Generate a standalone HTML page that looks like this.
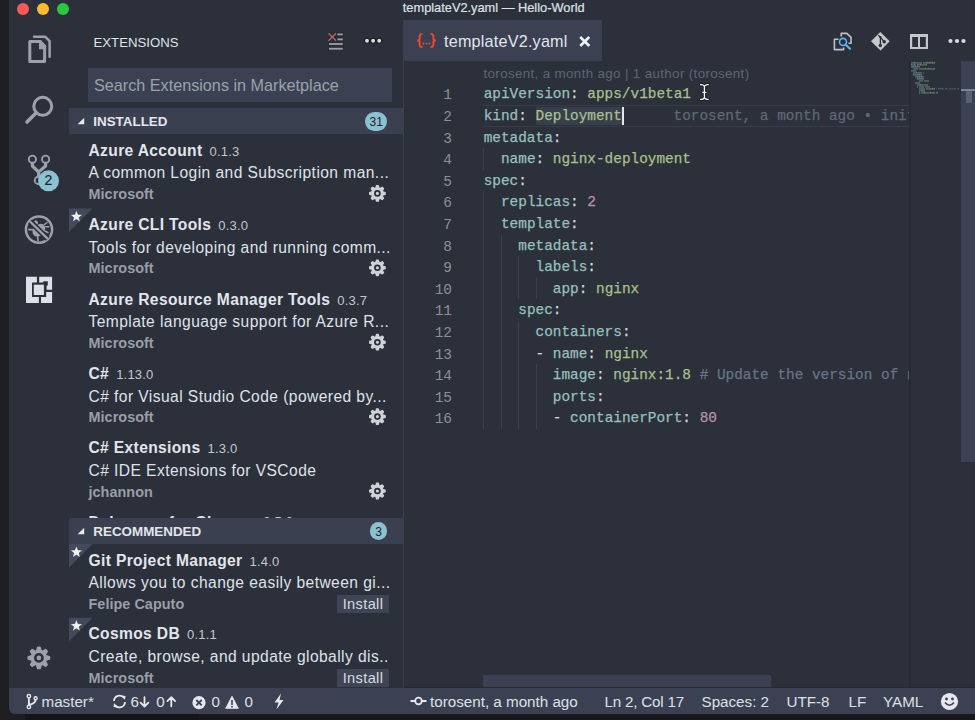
<!DOCTYPE html>
<html><head><meta charset="utf-8"><style>
*{margin:0;padding:0;box-sizing:border-box}
html,body{width:975px;height:720px;overflow:hidden;background:#1e1d21;font-family:"Liberation Sans",sans-serif}
.a{position:absolute;white-space:nowrap}
.t{font-weight:bold;font-size:15.6px;color:#e2e5ec;letter-spacing:0.35px}
.v{font-weight:normal;font-size:13px;color:#c3c7cf;letter-spacing:0.2px}
.d{font-size:15.6px;color:#dfe2e9;letter-spacing:0.43px}
.p{font-weight:bold;font-size:14.4px;color:#9a9ea8;letter-spacing:0.05px}
.hl{font-weight:bold;font-size:13.4px;color:#e2e5ec}
.badge{position:absolute;border-radius:10px;background:#8bc2d2;color:#2b303b;text-align:center}
.code{font-family:"Liberation Mono",monospace;font-size:14.4px;line-height:21.6px;-webkit-text-stroke:0.25px}
.ln{position:absolute;width:60px;text-align:right;color:#8a9099;font-family:"Liberation Mono",monospace;font-size:14.4px;line-height:21.6px}
.k{color:#96c0bf}.s{color:#a8c08b}.n{color:#b892b0}.w{color:#d5d8de}.c{color:#687585}
.sb{font-size:15.2px;color:#dde0e7}
.inst{width:52px;height:18px;background:#3f4555;color:#d8dbe2;font-size:14.6px;letter-spacing:0.35px;line-height:19px;text-align:center}
</style></head><body>
<div class="a" style="left:25px;top:714px;width:174px;height:6px;background:#151518;"></div>
<div class="a" style="left:199px;top:714px;width:776px;height:6px;background:#19191c;"></div>
<div class="a" style="left:9px;top:0px;width:966px;height:714px;background:#2b303b;border-bottom-left-radius:6px"></div>
<div class="a " style="left:402.8px;top:0.2px;font-size:12.8px;color:#dfe1e6;-webkit-text-stroke:0.2px">templateV2.yaml — Hello-World</div>
<div class="a " style="left:93.5px;top:35px;font-size:13.2px;color:#dfe2e9">EXTENSIONS</div>
<div class="a" style="left:88px;top:68px;width:304px;height:34px;background:#3b4152;"></div>
<div class="a " style="left:94px;top:76px;font-size:16.2px;color:#9ca1ab">Search Extensions in Marketplace</div>
<div class="a" style="left:69px;top:134px;width:334px;height:384px;overflow:hidden"><div style="position:absolute;left:-69px;top:-134px;width:975px;height:720px"><div class="a t" style="left:88.5px;top:141.7px">Azure Account<span class="v" style="margin-left:7px;">0.1.3</span></div><div class="a d" style="left:88.5px;top:164.4px">A common Login and Subscription man...</div><div class="a p" style="left:88.5px;top:185.9px">Microsoft</div><div class="a t" style="left:88.5px;top:216.1px">Azure CLI Tools<span class="v" style="margin-left:7px;">0.3.0</span></div><div class="a d" style="left:88.5px;top:238.8px">Tools for developing and running comm...</div><div class="a p" style="left:88.5px;top:260.3px">Microsoft</div><div class="a t" style="left:88.5px;top:290.5px">Azure Resource Manager Tools<span class="v" style="margin-left:7px;">0.3.7</span></div><div class="a d" style="left:88.5px;top:313.2px">Template language support for Azure R...</div><div class="a p" style="left:88.5px;top:334.7px">Microsoft</div><div class="a t" style="left:88.5px;top:364.90000000000003px">C#<span class="v" style="margin-left:7px;">1.13.0</span></div><div class="a d" style="left:88.5px;top:387.6px">C# for Visual Studio Code (powered by...</div><div class="a p" style="left:88.5px;top:409.1px">Microsoft</div><div class="a t" style="left:88.5px;top:439.3px">C# Extensions<span class="v" style="margin-left:7px;">1.3.0</span></div><div class="a d" style="left:88.5px;top:462.0px">C# IDE Extensions for VSCode</div><div class="a p" style="left:88.5px;top:483.5px">jchannon</div><div class="a t" style="left:88.5px;top:513.7px">Debugger for Chrome<span class="v" style="margin-left:7px;position:relative;top:-1.6px;">3.5.0</span></div><div class="a d" style="left:88.5px;top:536.4px">Debug your JavaScript code in the Chro...</div><div class="a p" style="left:88.5px;top:557.9px">Microsoft</div><svg class="a" style="left:0;top:0" width="975" height="720"><g transform="translate(377.4,193.4)" fill="#cfd2d7"><circle r="6.0"/><path d="M-1.65 -5.0 L-0.858 -7.7 L0.858 -7.7 L1.65 -5.0 Z" stroke="#cfd2d7" stroke-width="1.39" stroke-linejoin="round" transform="rotate(0.0)"/><path d="M-1.65 -5.0 L-0.858 -7.7 L0.858 -7.7 L1.65 -5.0 Z" stroke="#cfd2d7" stroke-width="1.39" stroke-linejoin="round" transform="rotate(45.0)"/><path d="M-1.65 -5.0 L-0.858 -7.7 L0.858 -7.7 L1.65 -5.0 Z" stroke="#cfd2d7" stroke-width="1.39" stroke-linejoin="round" transform="rotate(90.0)"/><path d="M-1.65 -5.0 L-0.858 -7.7 L0.858 -7.7 L1.65 -5.0 Z" stroke="#cfd2d7" stroke-width="1.39" stroke-linejoin="round" transform="rotate(135.0)"/><path d="M-1.65 -5.0 L-0.858 -7.7 L0.858 -7.7 L1.65 -5.0 Z" stroke="#cfd2d7" stroke-width="1.39" stroke-linejoin="round" transform="rotate(180.0)"/><path d="M-1.65 -5.0 L-0.858 -7.7 L0.858 -7.7 L1.65 -5.0 Z" stroke="#cfd2d7" stroke-width="1.39" stroke-linejoin="round" transform="rotate(225.0)"/><path d="M-1.65 -5.0 L-0.858 -7.7 L0.858 -7.7 L1.65 -5.0 Z" stroke="#cfd2d7" stroke-width="1.39" stroke-linejoin="round" transform="rotate(270.0)"/><path d="M-1.65 -5.0 L-0.858 -7.7 L0.858 -7.7 L1.65 -5.0 Z" stroke="#cfd2d7" stroke-width="1.39" stroke-linejoin="round" transform="rotate(315.0)"/><circle r="2.45" fill="none" stroke="#2b303b" stroke-width="1.75"/></g><path d="M69 208.4 H92.5 L69 231.9 Z" fill="#434a5c"/><polygon points="76.40,210.30 77.99,214.42 82.39,214.65 78.97,217.43 80.10,221.70 76.40,219.30 72.70,221.70 73.83,217.43 70.41,214.65 74.81,214.42" fill="#f2f3f5" stroke="#1d2027" stroke-width="0.6" stroke-opacity="0.5"/><g transform="translate(377.4,267.8)" fill="#cfd2d7"><circle r="6.0"/><path d="M-1.65 -5.0 L-0.858 -7.7 L0.858 -7.7 L1.65 -5.0 Z" stroke="#cfd2d7" stroke-width="1.39" stroke-linejoin="round" transform="rotate(0.0)"/><path d="M-1.65 -5.0 L-0.858 -7.7 L0.858 -7.7 L1.65 -5.0 Z" stroke="#cfd2d7" stroke-width="1.39" stroke-linejoin="round" transform="rotate(45.0)"/><path d="M-1.65 -5.0 L-0.858 -7.7 L0.858 -7.7 L1.65 -5.0 Z" stroke="#cfd2d7" stroke-width="1.39" stroke-linejoin="round" transform="rotate(90.0)"/><path d="M-1.65 -5.0 L-0.858 -7.7 L0.858 -7.7 L1.65 -5.0 Z" stroke="#cfd2d7" stroke-width="1.39" stroke-linejoin="round" transform="rotate(135.0)"/><path d="M-1.65 -5.0 L-0.858 -7.7 L0.858 -7.7 L1.65 -5.0 Z" stroke="#cfd2d7" stroke-width="1.39" stroke-linejoin="round" transform="rotate(180.0)"/><path d="M-1.65 -5.0 L-0.858 -7.7 L0.858 -7.7 L1.65 -5.0 Z" stroke="#cfd2d7" stroke-width="1.39" stroke-linejoin="round" transform="rotate(225.0)"/><path d="M-1.65 -5.0 L-0.858 -7.7 L0.858 -7.7 L1.65 -5.0 Z" stroke="#cfd2d7" stroke-width="1.39" stroke-linejoin="round" transform="rotate(270.0)"/><path d="M-1.65 -5.0 L-0.858 -7.7 L0.858 -7.7 L1.65 -5.0 Z" stroke="#cfd2d7" stroke-width="1.39" stroke-linejoin="round" transform="rotate(315.0)"/><circle r="2.45" fill="none" stroke="#2b303b" stroke-width="1.75"/></g><g transform="translate(377.4,342.2)" fill="#cfd2d7"><circle r="6.0"/><path d="M-1.65 -5.0 L-0.858 -7.7 L0.858 -7.7 L1.65 -5.0 Z" stroke="#cfd2d7" stroke-width="1.39" stroke-linejoin="round" transform="rotate(0.0)"/><path d="M-1.65 -5.0 L-0.858 -7.7 L0.858 -7.7 L1.65 -5.0 Z" stroke="#cfd2d7" stroke-width="1.39" stroke-linejoin="round" transform="rotate(45.0)"/><path d="M-1.65 -5.0 L-0.858 -7.7 L0.858 -7.7 L1.65 -5.0 Z" stroke="#cfd2d7" stroke-width="1.39" stroke-linejoin="round" transform="rotate(90.0)"/><path d="M-1.65 -5.0 L-0.858 -7.7 L0.858 -7.7 L1.65 -5.0 Z" stroke="#cfd2d7" stroke-width="1.39" stroke-linejoin="round" transform="rotate(135.0)"/><path d="M-1.65 -5.0 L-0.858 -7.7 L0.858 -7.7 L1.65 -5.0 Z" stroke="#cfd2d7" stroke-width="1.39" stroke-linejoin="round" transform="rotate(180.0)"/><path d="M-1.65 -5.0 L-0.858 -7.7 L0.858 -7.7 L1.65 -5.0 Z" stroke="#cfd2d7" stroke-width="1.39" stroke-linejoin="round" transform="rotate(225.0)"/><path d="M-1.65 -5.0 L-0.858 -7.7 L0.858 -7.7 L1.65 -5.0 Z" stroke="#cfd2d7" stroke-width="1.39" stroke-linejoin="round" transform="rotate(270.0)"/><path d="M-1.65 -5.0 L-0.858 -7.7 L0.858 -7.7 L1.65 -5.0 Z" stroke="#cfd2d7" stroke-width="1.39" stroke-linejoin="round" transform="rotate(315.0)"/><circle r="2.45" fill="none" stroke="#2b303b" stroke-width="1.75"/></g><g transform="translate(377.4,416.6)" fill="#cfd2d7"><circle r="6.0"/><path d="M-1.65 -5.0 L-0.858 -7.7 L0.858 -7.7 L1.65 -5.0 Z" stroke="#cfd2d7" stroke-width="1.39" stroke-linejoin="round" transform="rotate(0.0)"/><path d="M-1.65 -5.0 L-0.858 -7.7 L0.858 -7.7 L1.65 -5.0 Z" stroke="#cfd2d7" stroke-width="1.39" stroke-linejoin="round" transform="rotate(45.0)"/><path d="M-1.65 -5.0 L-0.858 -7.7 L0.858 -7.7 L1.65 -5.0 Z" stroke="#cfd2d7" stroke-width="1.39" stroke-linejoin="round" transform="rotate(90.0)"/><path d="M-1.65 -5.0 L-0.858 -7.7 L0.858 -7.7 L1.65 -5.0 Z" stroke="#cfd2d7" stroke-width="1.39" stroke-linejoin="round" transform="rotate(135.0)"/><path d="M-1.65 -5.0 L-0.858 -7.7 L0.858 -7.7 L1.65 -5.0 Z" stroke="#cfd2d7" stroke-width="1.39" stroke-linejoin="round" transform="rotate(180.0)"/><path d="M-1.65 -5.0 L-0.858 -7.7 L0.858 -7.7 L1.65 -5.0 Z" stroke="#cfd2d7" stroke-width="1.39" stroke-linejoin="round" transform="rotate(225.0)"/><path d="M-1.65 -5.0 L-0.858 -7.7 L0.858 -7.7 L1.65 -5.0 Z" stroke="#cfd2d7" stroke-width="1.39" stroke-linejoin="round" transform="rotate(270.0)"/><path d="M-1.65 -5.0 L-0.858 -7.7 L0.858 -7.7 L1.65 -5.0 Z" stroke="#cfd2d7" stroke-width="1.39" stroke-linejoin="round" transform="rotate(315.0)"/><circle r="2.45" fill="none" stroke="#2b303b" stroke-width="1.75"/></g><g transform="translate(377.4,491.0)" fill="#cfd2d7"><circle r="6.0"/><path d="M-1.65 -5.0 L-0.858 -7.7 L0.858 -7.7 L1.65 -5.0 Z" stroke="#cfd2d7" stroke-width="1.39" stroke-linejoin="round" transform="rotate(0.0)"/><path d="M-1.65 -5.0 L-0.858 -7.7 L0.858 -7.7 L1.65 -5.0 Z" stroke="#cfd2d7" stroke-width="1.39" stroke-linejoin="round" transform="rotate(45.0)"/><path d="M-1.65 -5.0 L-0.858 -7.7 L0.858 -7.7 L1.65 -5.0 Z" stroke="#cfd2d7" stroke-width="1.39" stroke-linejoin="round" transform="rotate(90.0)"/><path d="M-1.65 -5.0 L-0.858 -7.7 L0.858 -7.7 L1.65 -5.0 Z" stroke="#cfd2d7" stroke-width="1.39" stroke-linejoin="round" transform="rotate(135.0)"/><path d="M-1.65 -5.0 L-0.858 -7.7 L0.858 -7.7 L1.65 -5.0 Z" stroke="#cfd2d7" stroke-width="1.39" stroke-linejoin="round" transform="rotate(180.0)"/><path d="M-1.65 -5.0 L-0.858 -7.7 L0.858 -7.7 L1.65 -5.0 Z" stroke="#cfd2d7" stroke-width="1.39" stroke-linejoin="round" transform="rotate(225.0)"/><path d="M-1.65 -5.0 L-0.858 -7.7 L0.858 -7.7 L1.65 -5.0 Z" stroke="#cfd2d7" stroke-width="1.39" stroke-linejoin="round" transform="rotate(270.0)"/><path d="M-1.65 -5.0 L-0.858 -7.7 L0.858 -7.7 L1.65 -5.0 Z" stroke="#cfd2d7" stroke-width="1.39" stroke-linejoin="round" transform="rotate(315.0)"/><circle r="2.45" fill="none" stroke="#2b303b" stroke-width="1.75"/></g><g transform="translate(377.4,565.4)" fill="#cfd2d7"><circle r="6.0"/><path d="M-1.65 -5.0 L-0.858 -7.7 L0.858 -7.7 L1.65 -5.0 Z" stroke="#cfd2d7" stroke-width="1.39" stroke-linejoin="round" transform="rotate(0.0)"/><path d="M-1.65 -5.0 L-0.858 -7.7 L0.858 -7.7 L1.65 -5.0 Z" stroke="#cfd2d7" stroke-width="1.39" stroke-linejoin="round" transform="rotate(45.0)"/><path d="M-1.65 -5.0 L-0.858 -7.7 L0.858 -7.7 L1.65 -5.0 Z" stroke="#cfd2d7" stroke-width="1.39" stroke-linejoin="round" transform="rotate(90.0)"/><path d="M-1.65 -5.0 L-0.858 -7.7 L0.858 -7.7 L1.65 -5.0 Z" stroke="#cfd2d7" stroke-width="1.39" stroke-linejoin="round" transform="rotate(135.0)"/><path d="M-1.65 -5.0 L-0.858 -7.7 L0.858 -7.7 L1.65 -5.0 Z" stroke="#cfd2d7" stroke-width="1.39" stroke-linejoin="round" transform="rotate(180.0)"/><path d="M-1.65 -5.0 L-0.858 -7.7 L0.858 -7.7 L1.65 -5.0 Z" stroke="#cfd2d7" stroke-width="1.39" stroke-linejoin="round" transform="rotate(225.0)"/><path d="M-1.65 -5.0 L-0.858 -7.7 L0.858 -7.7 L1.65 -5.0 Z" stroke="#cfd2d7" stroke-width="1.39" stroke-linejoin="round" transform="rotate(270.0)"/><path d="M-1.65 -5.0 L-0.858 -7.7 L0.858 -7.7 L1.65 -5.0 Z" stroke="#cfd2d7" stroke-width="1.39" stroke-linejoin="round" transform="rotate(315.0)"/><circle r="2.45" fill="none" stroke="#2b303b" stroke-width="1.75"/></g></svg></div></div>
<div class="a" style="left:69px;top:108px;width:334px;height:26px;background:#3b4050;"></div>
<div class="a hl" style="left:93.3px;top:114px;">INSTALLED</div>
<div class="badge" style="left:365.2px;top:111.5px;width:22px;height:19px;line-height:21.5px;font-size:12px;color:#1f2229;border-radius:9.5px">31</div>
<div class="a" style="left:69px;top:518px;width:334px;height:26px;background:#3b4050;"></div>
<div class="a hl" style="left:93.3px;top:524px;">RECOMMENDED</div>
<div class="badge" style="left:370.0px;top:522.0px;width:17.2px;height:18px;line-height:20.5px;font-size:12px;color:#1f2229;border-radius:9.0px">3</div>
<div class="a" style="left:69px;top:544px;width:334px;height:144px;overflow:hidden"><div style="position:absolute;left:-69px;top:-544px;width:975px;height:720px"><div class="a t" style="left:88.5px;top:551.7px">Git Project Manager<span class="v" style="margin-left:7px;">1.4.0</span></div><div class="a d" style="left:88.5px;top:574.4px">Allows you to change easily between gi...</div><div class="a p" style="left:88.5px;top:595.9px">Felipe Caputo</div><div class="a inst" style="left:337px;top:595.0px">Install</div><div class="a t" style="left:88.5px;top:625.4000000000001px">Cosmos DB<span class="v" style="margin-left:7px;">0.1.1</span></div><div class="a d" style="left:88.5px;top:648.1px">Create, browse, and update globally dis..</div><div class="a p" style="left:88.5px;top:669.6px">Microsoft</div><div class="a inst" style="left:337px;top:668.7px">Install</div><svg class="a" style="left:0;top:0" width="975" height="720"><path d="M69 544.0 H92.5 L69 567.5 Z" fill="#434a5c"/><polygon points="76.40,545.90 77.99,550.02 82.39,550.25 78.97,553.03 80.10,557.30 76.40,554.90 72.70,557.30 73.83,553.03 70.41,550.25 74.81,550.02" fill="#f2f3f5" stroke="#1d2027" stroke-width="0.6" stroke-opacity="0.5"/><path d="M69 617.7 H92.5 L69 641.2 Z" fill="#434a5c"/><polygon points="76.40,619.60 77.99,623.72 82.39,623.95 78.97,626.73 80.10,631.00 76.40,628.60 72.70,631.00 73.83,626.73 70.41,623.95 74.81,623.72" fill="#f2f3f5" stroke="#1d2027" stroke-width="0.6" stroke-opacity="0.5"/></svg></div></div>
<div class="a" style="left:403px;top:20px;width:1px;height:668px;background:#3a404d;"></div>
<div class="a" style="left:403.3px;top:20px;width:198.4px;height:41px;background:#3b4152;"></div>
<div class="a " style="left:444px;top:32px;font-size:16.2px;color:#e2e5ec;letter-spacing:0.2px">templateV2.yaml</div>
<div class="a " style="left:483.5px;top:65.8px;font-size:13.4px;letter-spacing:0.34px;color:#5d6676">torosent, a month ago | 1 author (torosent)</div>
<div class="a" style="left:404px;top:61px;width:506px;height:627px;overflow:hidden"><div style="position:absolute;left:-404px;top:-61px;width:975px;height:720px"><div class="a" style="left:483px;top:105.0px;width:427px;height:21.6px;border-top:1.5px solid #363c49;border-bottom:1.5px solid #363c49"></div><div class="a" style="left:535.54px;top:106.5px;width:86.4px;height:18.6px;background:#383e4b"></div><div class="a" style="left:483.2px;top:148.20000000000002px;width:1px;height:21.6px;background:#3a404c"></div><div class="a" style="left:483.2px;top:191.4px;width:1px;height:237.60000000000002px;background:#3a404c"></div><div class="a" style="left:500.98px;top:234.60000000000002px;width:1px;height:194.4px;background:#3a404c"></div><div class="a" style="left:518.26px;top:256.20000000000005px;width:1px;height:43.2px;background:#3a404c"></div><div class="a" style="left:535.54px;top:277.8px;width:1px;height:21.6px;background:#3a404c"></div><div class="a" style="left:518.26px;top:321.0px;width:1px;height:108.0px;background:#3a404c"></div><div class="a" style="left:535.54px;top:364.20000000000005px;width:1px;height:64.80000000000001px;background:#3a404c"></div><div class="ln" style="left:392px;top:85.4px">1</div><div class="a code" style="left:483.7px;top:84.30000000000001px"><span class="k">apiVersion</span><span class="w">:</span> <span class="s">apps/v1beta1</span></div><div class="ln" style="left:392px;top:107.0px">2</div><div class="a code" style="left:483.7px;top:105.9px"><span class="k">kind</span><span class="w">:</span> <span class="s">Deployment</span></div><div class="ln" style="left:392px;top:128.60000000000002px">3</div><div class="a code" style="left:483.7px;top:127.50000000000001px"><span class="k">metadata</span><span class="w">:</span></div><div class="ln" style="left:392px;top:150.20000000000002px">4</div><div class="a code" style="left:500.98px;top:149.10000000000002px"><span class="k">name</span><span class="w">:</span> <span class="s">nginx-deployment</span></div><div class="ln" style="left:392px;top:171.8px">5</div><div class="a code" style="left:483.7px;top:170.70000000000002px"><span class="k">spec</span><span class="w">:</span></div><div class="ln" style="left:392px;top:193.4px">6</div><div class="a code" style="left:500.98px;top:192.3px"><span class="k">replicas</span><span class="w">:</span> <span class="n">2</span></div><div class="ln" style="left:392px;top:215.00000000000003px">7</div><div class="a code" style="left:500.98px;top:213.90000000000003px"><span class="k">template</span><span class="w">:</span></div><div class="ln" style="left:392px;top:236.60000000000002px">8</div><div class="a code" style="left:518.26px;top:235.50000000000003px"><span class="k">metadata</span><span class="w">:</span></div><div class="ln" style="left:392px;top:258.20000000000005px">9</div><div class="a code" style="left:535.54px;top:257.1px"><span class="k">labels</span><span class="w">:</span></div><div class="ln" style="left:392px;top:279.8px">10</div><div class="a code" style="left:552.8199999999999px;top:278.7px"><span class="k">app</span><span class="w">:</span> <span class="s">nginx</span></div><div class="ln" style="left:392px;top:301.4px">11</div><div class="a code" style="left:518.26px;top:300.29999999999995px"><span class="k">spec</span><span class="w">:</span></div><div class="ln" style="left:392px;top:323.0px">12</div><div class="a code" style="left:535.54px;top:321.9px"><span class="k">containers</span><span class="w">:</span></div><div class="ln" style="left:392px;top:344.6px">13</div><div class="a code" style="left:535.54px;top:343.5px"><span class="w">-</span> <span class="k">name</span><span class="w">:</span> <span class="s">nginx</span></div><div class="ln" style="left:392px;top:366.20000000000005px">14</div><div class="a code" style="left:552.8199999999999px;top:365.1px"><span class="k">image</span><span class="w">:</span> <span class="s">nginx:1.8</span> <span class="c"># Update the version of nginx</span></div><div class="ln" style="left:392px;top:387.80000000000007px">15</div><div class="a code" style="left:552.8199999999999px;top:386.70000000000005px"><span class="k">ports</span><span class="w">:</span></div><div class="ln" style="left:392px;top:409.4px">16</div><div class="a code" style="left:552.8199999999999px;top:408.29999999999995px"><span class="w">-</span> <span class="k">containerPort</span><span class="w">:</span> <span class="n">80</span></div><div class="a code" style="left:673.5px;top:105.9px;color:#5f6877">torosent, a month ago • initial commit</div><svg class="a" style="left:0;top:0" width="975" height="720"></svg></div></div>
<div class="a" style="left:621.5px;top:107.0px;width:2px;height:17.6px;background:#e6e8ee;"></div>
<div class="a" style="left:909px;top:61px;width:1.5px;height:627px;background:#262a33;"></div>
<div class="a" style="left:960.5px;top:61px;width:15px;height:401px;background:#3b4152;"></div>
<div class="a" style="left:960.5px;top:88.5px;width:15px;height:2px;background:#7d8593;"></div>
<div class="a" style="left:965.5px;top:91px;width:6px;height:12px;background:#56626f;"></div>
<div class="a" style="left:483px;top:675px;width:288px;height:12px;background:#3b4152;"></div>
<div class="a" style="left:404px;top:687px;width:571px;height:1.2px;background:#262a33;"></div>
<div class="a" style="left:9px;top:688px;width:966px;height:26px;background:#3b4152;border-bottom-left-radius:6px"></div>
<svg class="a" style="left:0;top:0" width="975" height="720">
<circle cx="23" cy="9" r="6" fill="#fc5b57"/>
<circle cx="43" cy="9" r="6" fill="#fdbc2e"/>
<circle cx="63" cy="9" r="6" fill="#28c840"/>
<path d="M29.8 41.5 H40.2 L44.6 46 V61.5 H29.8 Z" fill="none" stroke="#9da1ac" stroke-width="3" stroke-linejoin="round"/>
<path d="M39 40 H40.8 L46.1 46.6 V49.3 H39 Z" fill="#9da1ac"/>
<path d="M34 36.8 H45.4 L49.6 41.2 V56.8" fill="none" stroke="#9da1ac" stroke-width="2.5" stroke-linecap="round" stroke-linejoin="round"/>
<circle cx="42.75" cy="106.3" r="9" fill="none" stroke="#9da1ac" stroke-width="3"/>
<path d="M35.5 113.5 L27 122" stroke="#9da1ac" stroke-width="3.6" stroke-linecap="round"/>
<g fill="none" stroke="#9da1ac" stroke-width="1.9"><circle cx="32.4" cy="159.2" r="3.6"/><circle cx="45.6" cy="159.2" r="3.6"/><circle cx="38.3" cy="180.4" r="3.6"/></g>
<path d="M32.4 162.5 V166 L38.6 172 V177 M45.6 162.5 V166 L38.6 172" fill="none" stroke="#9da1ac" stroke-width="3.2" stroke-linejoin="round"/>
<circle cx="48.5" cy="180.8" r="10.5" fill="#8bc2d2"/>
<circle cx="39" cy="229.6" r="13.1" fill="none" stroke="#9da1ac" stroke-width="2.5"/>
<g fill="#9da1ac"><ellipse cx="38.8" cy="230.2" rx="7.2" ry="5.4" transform="rotate(-45 38.8 230.2)"/><ellipse cx="36.2" cy="222.3" rx="2.2" ry="1.6" transform="rotate(45 36.2 222.3)"/></g><path d="M44.5 224.5 L47 222.5 M45.5 226.8 H48.8 M44.8 231 L48 232.5 M33.5 229.6 H28.8 M37.6 235.5 L38 240.8" stroke="#9da1ac" stroke-width="1.6" fill="none" stroke-linecap="round"/>
<path d="M30 221.5 L47.8 238.8" stroke="#2b303b" stroke-width="5.5"/>
<path d="M30 221.5 L47.8 238.8" stroke="#9da1ac" stroke-width="2.4"/>
<g fill="#dbe0e9"><path d="M26 276.8 H36.9 V282.5 H32 V297 H38.9 V303.1 H26 Z"/><path d="M39.2 276.8 H52.1 V289.7 H46.6 V285.5 H47.8 V281.2 H43.3 V282.5 H39.2 Z"/><path d="M46.2 292 H52.1 V303.1 H41 V297 H46.2 Z"/><rect x="33.8" y="284.7" width="10.1" height="10.3"/></g>
<g transform="translate(38.9,657.9)" fill="#9da1ac"><circle r="8.0"/><path d="M-2.1 -7.0 L-1.092 -10.5 L1.092 -10.5 L2.1 -7.0 Z" stroke="#9da1ac" stroke-width="1.76" stroke-linejoin="round" transform="rotate(0.0)"/><path d="M-2.1 -7.0 L-1.092 -10.5 L1.092 -10.5 L2.1 -7.0 Z" stroke="#9da1ac" stroke-width="1.76" stroke-linejoin="round" transform="rotate(45.0)"/><path d="M-2.1 -7.0 L-1.092 -10.5 L1.092 -10.5 L2.1 -7.0 Z" stroke="#9da1ac" stroke-width="1.76" stroke-linejoin="round" transform="rotate(90.0)"/><path d="M-2.1 -7.0 L-1.092 -10.5 L1.092 -10.5 L2.1 -7.0 Z" stroke="#9da1ac" stroke-width="1.76" stroke-linejoin="round" transform="rotate(135.0)"/><path d="M-2.1 -7.0 L-1.092 -10.5 L1.092 -10.5 L2.1 -7.0 Z" stroke="#9da1ac" stroke-width="1.76" stroke-linejoin="round" transform="rotate(180.0)"/><path d="M-2.1 -7.0 L-1.092 -10.5 L1.092 -10.5 L2.1 -7.0 Z" stroke="#9da1ac" stroke-width="1.76" stroke-linejoin="round" transform="rotate(225.0)"/><path d="M-2.1 -7.0 L-1.092 -10.5 L1.092 -10.5 L2.1 -7.0 Z" stroke="#9da1ac" stroke-width="1.76" stroke-linejoin="round" transform="rotate(270.0)"/><path d="M-2.1 -7.0 L-1.092 -10.5 L1.092 -10.5 L2.1 -7.0 Z" stroke="#9da1ac" stroke-width="1.76" stroke-linejoin="round" transform="rotate(315.0)"/><circle r="3.6" fill="none" stroke="#2b303b" stroke-width="2.6"/></g>
<g stroke="#1d2027" stroke-width="1" stroke-opacity="0.8"><rect x="337" y="33" width="6.2" height="2.8" fill="#9a9ea8"/><rect x="337" y="38" width="6.2" height="2.8" fill="#9a9ea8"/><rect x="328.5" y="42.6" width="14.7" height="2.8" fill="#9a9ea8"/><rect x="328.5" y="47.3" width="14.7" height="2.8" fill="#9a9ea8"/></g>
<path d="M328.5 33.2 L336 40.8 M336 33.2 L328.5 40.8" stroke="#1d2027" stroke-width="2.8" stroke-opacity="0.6"/><path d="M328.5 33.2 L336 40.8 M336 33.2 L328.5 40.8" stroke="#b06a60" stroke-width="1.5"/>
<g fill="#dcdee3" stroke="#15171c" stroke-width="1.1"><circle cx="367" cy="40.8" r="2.5"/><circle cx="373.1" cy="40.8" r="2.5"/><circle cx="379.2" cy="40.8" r="2.5"/></g>
<path d="M84.2 117.8 V124.2 H77.6 Z" fill="#e6e8ee"/>
<path d="M84.2 527.8 V534.2 H77.6 Z" fill="#e6e8ee"/>
<g fill="none" stroke="#f2452d" stroke-width="1.9"><path d="M422.5 33.9 Q419.6 33.9 419.6 36.6 V38.8 Q419.6 40.5 417.2 40.5 Q419.6 40.5 419.6 42.2 V44.6 Q419.6 47.2 422.5 47.2"/><path d="M430.5 33.9 Q433.4 33.9 433.4 36.6 V38.8 Q433.4 40.5 435.8 40.5 Q433.4 40.5 433.4 42.2 V44.6 Q433.4 47.2 430.5 47.2"/></g><g fill="#f2452d"><circle cx="423.3" cy="43.5" r="1.05"/><circle cx="426.4" cy="43.5" r="1.05"/><circle cx="429.5" cy="43.5" r="1.05"/></g>
<path d="M580.2 37 L589.3 46 M589.3 37 L580.2 46" stroke="#f0f1f4" stroke-width="2.6"/>
<path d="M700.6 84.6 Q703 84.4 704.4 86.2 Q705.8 84.4 708.2 84.6 M704.4 86.2 V97.8 M700.6 99.4 Q703 99.6 704.4 97.8 Q705.8 99.6 708.2 99.4 M702.8 92.4 H706" fill="none" stroke="#15171c" stroke-width="3" stroke-opacity="0.7" stroke-linecap="round"/><path d="M700.6 84.6 Q703 84.4 704.4 86.2 Q705.8 84.4 708.2 84.6 M704.4 86.2 V97.8 M700.6 99.4 Q703 99.6 704.4 97.8 Q705.8 99.6 708.2 99.4 M702.8 92.4 H706" fill="none" stroke="#ffffff" stroke-width="1.3" stroke-linecap="round"/>
<rect x="911" y="62.4" width="0.9" height="1.1" fill="#8fb9b8" opacity="0.62"/>
<rect x="912" y="62.4" width="0.9" height="1.1" fill="#8fb9b8" opacity="0.62"/>
<rect x="913" y="62.4" width="0.9" height="1.1" fill="#8fb9b8" opacity="0.62"/>
<rect x="914" y="61.8" width="0.9" height="1.7" fill="#8fb9b8" opacity="0.62"/>
<rect x="915" y="62.4" width="0.9" height="1.1" fill="#8fb9b8" opacity="0.62"/>
<rect x="916" y="62.4" width="0.9" height="1.1" fill="#8fb9b8" opacity="0.62"/>
<rect x="917" y="62.4" width="0.9" height="1.1" fill="#8fb9b8" opacity="0.62"/>
<rect x="918" y="62.4" width="0.9" height="1.1" fill="#8fb9b8" opacity="0.62"/>
<rect x="919" y="62.4" width="0.9" height="1.1" fill="#8fb9b8" opacity="0.62"/>
<rect x="920" y="62.4" width="0.9" height="1.1" fill="#8fb9b8" opacity="0.62"/>
<rect x="921" y="62.4" width="0.9" height="1.1" fill="#b9bdc5" opacity="0.62"/>
<rect x="923" y="62.4" width="0.9" height="1.1" fill="#a3bd8a" opacity="0.62"/>
<rect x="924" y="62.4" width="0.9" height="1.1" fill="#a3bd8a" opacity="0.62"/>
<rect x="925" y="62.4" width="0.9" height="1.1" fill="#a3bd8a" opacity="0.62"/>
<rect x="926" y="62.4" width="0.9" height="1.1" fill="#a3bd8a" opacity="0.62"/>
<rect x="927" y="61.8" width="0.9" height="1.7" fill="#a3bd8a" opacity="0.62"/>
<rect x="928" y="62.4" width="0.9" height="1.1" fill="#a3bd8a" opacity="0.62"/>
<rect x="929" y="61.8" width="0.9" height="1.7" fill="#a3bd8a" opacity="0.62"/>
<rect x="930" y="61.8" width="0.9" height="1.7" fill="#a3bd8a" opacity="0.62"/>
<rect x="931" y="62.4" width="0.9" height="1.1" fill="#a3bd8a" opacity="0.62"/>
<rect x="932" y="61.8" width="0.9" height="1.7" fill="#a3bd8a" opacity="0.62"/>
<rect x="933" y="62.4" width="0.9" height="1.1" fill="#a3bd8a" opacity="0.62"/>
<rect x="934" y="61.8" width="0.9" height="1.7" fill="#a3bd8a" opacity="0.62"/>
<rect x="911" y="63.8" width="0.9" height="1.7" fill="#8fb9b8" opacity="0.62"/>
<rect x="912" y="64.4" width="0.9" height="1.1" fill="#8fb9b8" opacity="0.62"/>
<rect x="913" y="64.4" width="0.9" height="1.1" fill="#8fb9b8" opacity="0.62"/>
<rect x="914" y="63.8" width="0.9" height="1.7" fill="#8fb9b8" opacity="0.62"/>
<rect x="915" y="64.4" width="0.9" height="1.1" fill="#b9bdc5" opacity="0.62"/>
<rect x="917" y="63.8" width="0.9" height="1.7" fill="#a3bd8a" opacity="0.62"/>
<rect x="918" y="64.4" width="0.9" height="1.1" fill="#a3bd8a" opacity="0.62"/>
<rect x="919" y="64.4" width="0.9" height="1.1" fill="#a3bd8a" opacity="0.62"/>
<rect x="920" y="63.8" width="0.9" height="1.7" fill="#a3bd8a" opacity="0.62"/>
<rect x="921" y="64.4" width="0.9" height="1.1" fill="#a3bd8a" opacity="0.62"/>
<rect x="922" y="64.4" width="0.9" height="1.1" fill="#a3bd8a" opacity="0.62"/>
<rect x="923" y="64.4" width="0.9" height="1.1" fill="#a3bd8a" opacity="0.62"/>
<rect x="924" y="64.4" width="0.9" height="1.1" fill="#a3bd8a" opacity="0.62"/>
<rect x="925" y="64.4" width="0.9" height="1.1" fill="#a3bd8a" opacity="0.62"/>
<rect x="926" y="63.8" width="0.9" height="1.7" fill="#a3bd8a" opacity="0.62"/>
<rect x="911" y="66.4" width="0.9" height="1.1" fill="#8fb9b8" opacity="0.62"/>
<rect x="912" y="66.4" width="0.9" height="1.1" fill="#8fb9b8" opacity="0.62"/>
<rect x="913" y="65.8" width="0.9" height="1.7" fill="#8fb9b8" opacity="0.62"/>
<rect x="914" y="66.4" width="0.9" height="1.1" fill="#8fb9b8" opacity="0.62"/>
<rect x="915" y="65.8" width="0.9" height="1.7" fill="#8fb9b8" opacity="0.62"/>
<rect x="916" y="66.4" width="0.9" height="1.1" fill="#8fb9b8" opacity="0.62"/>
<rect x="917" y="65.8" width="0.9" height="1.7" fill="#8fb9b8" opacity="0.62"/>
<rect x="918" y="66.4" width="0.9" height="1.1" fill="#8fb9b8" opacity="0.62"/>
<rect x="919" y="66.4" width="0.9" height="1.1" fill="#b9bdc5" opacity="0.62"/>
<rect x="913" y="68.4" width="0.9" height="1.1" fill="#8fb9b8" opacity="0.62"/>
<rect x="914" y="68.4" width="0.9" height="1.1" fill="#8fb9b8" opacity="0.62"/>
<rect x="915" y="68.4" width="0.9" height="1.1" fill="#8fb9b8" opacity="0.62"/>
<rect x="916" y="68.4" width="0.9" height="1.1" fill="#8fb9b8" opacity="0.62"/>
<rect x="917" y="68.4" width="0.9" height="1.1" fill="#b9bdc5" opacity="0.62"/>
<rect x="919" y="68.4" width="0.9" height="1.1" fill="#a3bd8a" opacity="0.62"/>
<rect x="920" y="68.4" width="0.9" height="1.1" fill="#a3bd8a" opacity="0.62"/>
<rect x="921" y="68.4" width="0.9" height="1.1" fill="#a3bd8a" opacity="0.62"/>
<rect x="922" y="68.4" width="0.9" height="1.1" fill="#a3bd8a" opacity="0.62"/>
<rect x="923" y="68.4" width="0.9" height="1.1" fill="#a3bd8a" opacity="0.62"/>
<rect x="924" y="68.4" width="0.9" height="1.1" fill="#a3bd8a" opacity="0.62"/>
<rect x="925" y="67.8" width="0.9" height="1.7" fill="#a3bd8a" opacity="0.62"/>
<rect x="926" y="68.4" width="0.9" height="1.1" fill="#a3bd8a" opacity="0.62"/>
<rect x="927" y="68.4" width="0.9" height="1.1" fill="#a3bd8a" opacity="0.62"/>
<rect x="928" y="67.8" width="0.9" height="1.7" fill="#a3bd8a" opacity="0.62"/>
<rect x="929" y="68.4" width="0.9" height="1.1" fill="#a3bd8a" opacity="0.62"/>
<rect x="930" y="68.4" width="0.9" height="1.1" fill="#a3bd8a" opacity="0.62"/>
<rect x="931" y="68.4" width="0.9" height="1.1" fill="#a3bd8a" opacity="0.62"/>
<rect x="932" y="68.4" width="0.9" height="1.1" fill="#a3bd8a" opacity="0.62"/>
<rect x="933" y="68.4" width="0.9" height="1.1" fill="#a3bd8a" opacity="0.62"/>
<rect x="934" y="67.8" width="0.9" height="1.7" fill="#a3bd8a" opacity="0.62"/>
<rect x="911" y="70.4" width="0.9" height="1.1" fill="#8fb9b8" opacity="0.62"/>
<rect x="912" y="70.4" width="0.9" height="1.1" fill="#8fb9b8" opacity="0.62"/>
<rect x="913" y="70.4" width="0.9" height="1.1" fill="#8fb9b8" opacity="0.62"/>
<rect x="914" y="70.4" width="0.9" height="1.1" fill="#8fb9b8" opacity="0.62"/>
<rect x="915" y="70.4" width="0.9" height="1.1" fill="#b9bdc5" opacity="0.62"/>
<rect x="913" y="72.4" width="0.9" height="1.1" fill="#8fb9b8" opacity="0.62"/>
<rect x="914" y="72.4" width="0.9" height="1.1" fill="#8fb9b8" opacity="0.62"/>
<rect x="915" y="72.4" width="0.9" height="1.1" fill="#8fb9b8" opacity="0.62"/>
<rect x="916" y="71.8" width="0.9" height="1.7" fill="#8fb9b8" opacity="0.62"/>
<rect x="917" y="72.4" width="0.9" height="1.1" fill="#8fb9b8" opacity="0.62"/>
<rect x="918" y="72.4" width="0.9" height="1.1" fill="#8fb9b8" opacity="0.62"/>
<rect x="919" y="72.4" width="0.9" height="1.1" fill="#8fb9b8" opacity="0.62"/>
<rect x="920" y="72.4" width="0.9" height="1.1" fill="#8fb9b8" opacity="0.62"/>
<rect x="921" y="72.4" width="0.9" height="1.1" fill="#b9bdc5" opacity="0.62"/>
<rect x="923" y="72.4" width="0.9" height="1.1" fill="#b48eab" opacity="0.62"/>
<rect x="913" y="73.8" width="0.9" height="1.7" fill="#8fb9b8" opacity="0.62"/>
<rect x="914" y="74.4" width="0.9" height="1.1" fill="#8fb9b8" opacity="0.62"/>
<rect x="915" y="74.4" width="0.9" height="1.1" fill="#8fb9b8" opacity="0.62"/>
<rect x="916" y="74.4" width="0.9" height="1.1" fill="#8fb9b8" opacity="0.62"/>
<rect x="917" y="73.8" width="0.9" height="1.7" fill="#8fb9b8" opacity="0.62"/>
<rect x="918" y="74.4" width="0.9" height="1.1" fill="#8fb9b8" opacity="0.62"/>
<rect x="919" y="73.8" width="0.9" height="1.7" fill="#8fb9b8" opacity="0.62"/>
<rect x="920" y="74.4" width="0.9" height="1.1" fill="#8fb9b8" opacity="0.62"/>
<rect x="921" y="74.4" width="0.9" height="1.1" fill="#b9bdc5" opacity="0.62"/>
<rect x="915" y="76.4" width="0.9" height="1.1" fill="#8fb9b8" opacity="0.62"/>
<rect x="916" y="76.4" width="0.9" height="1.1" fill="#8fb9b8" opacity="0.62"/>
<rect x="917" y="75.8" width="0.9" height="1.7" fill="#8fb9b8" opacity="0.62"/>
<rect x="918" y="76.4" width="0.9" height="1.1" fill="#8fb9b8" opacity="0.62"/>
<rect x="919" y="75.8" width="0.9" height="1.7" fill="#8fb9b8" opacity="0.62"/>
<rect x="920" y="76.4" width="0.9" height="1.1" fill="#8fb9b8" opacity="0.62"/>
<rect x="921" y="75.8" width="0.9" height="1.7" fill="#8fb9b8" opacity="0.62"/>
<rect x="922" y="76.4" width="0.9" height="1.1" fill="#8fb9b8" opacity="0.62"/>
<rect x="923" y="76.4" width="0.9" height="1.1" fill="#b9bdc5" opacity="0.62"/>
<rect x="917" y="77.8" width="0.9" height="1.7" fill="#8fb9b8" opacity="0.62"/>
<rect x="918" y="78.4" width="0.9" height="1.1" fill="#8fb9b8" opacity="0.62"/>
<rect x="919" y="77.8" width="0.9" height="1.7" fill="#8fb9b8" opacity="0.62"/>
<rect x="920" y="78.4" width="0.9" height="1.1" fill="#8fb9b8" opacity="0.62"/>
<rect x="921" y="77.8" width="0.9" height="1.7" fill="#8fb9b8" opacity="0.62"/>
<rect x="922" y="78.4" width="0.9" height="1.1" fill="#8fb9b8" opacity="0.62"/>
<rect x="923" y="78.4" width="0.9" height="1.1" fill="#b9bdc5" opacity="0.62"/>
<rect x="919" y="80.4" width="0.9" height="1.1" fill="#8fb9b8" opacity="0.62"/>
<rect x="920" y="80.4" width="0.9" height="1.1" fill="#8fb9b8" opacity="0.62"/>
<rect x="921" y="80.4" width="0.9" height="1.1" fill="#8fb9b8" opacity="0.62"/>
<rect x="922" y="80.4" width="0.9" height="1.1" fill="#b9bdc5" opacity="0.62"/>
<rect x="924" y="80.4" width="0.9" height="1.1" fill="#a3bd8a" opacity="0.62"/>
<rect x="925" y="80.4" width="0.9" height="1.1" fill="#a3bd8a" opacity="0.62"/>
<rect x="926" y="80.4" width="0.9" height="1.1" fill="#a3bd8a" opacity="0.62"/>
<rect x="927" y="80.4" width="0.9" height="1.1" fill="#a3bd8a" opacity="0.62"/>
<rect x="928" y="80.4" width="0.9" height="1.1" fill="#a3bd8a" opacity="0.62"/>
<rect x="915" y="82.4" width="0.9" height="1.1" fill="#8fb9b8" opacity="0.62"/>
<rect x="916" y="82.4" width="0.9" height="1.1" fill="#8fb9b8" opacity="0.62"/>
<rect x="917" y="82.4" width="0.9" height="1.1" fill="#8fb9b8" opacity="0.62"/>
<rect x="918" y="82.4" width="0.9" height="1.1" fill="#8fb9b8" opacity="0.62"/>
<rect x="919" y="82.4" width="0.9" height="1.1" fill="#b9bdc5" opacity="0.62"/>
<rect x="917" y="84.4" width="0.9" height="1.1" fill="#8fb9b8" opacity="0.62"/>
<rect x="918" y="84.4" width="0.9" height="1.1" fill="#8fb9b8" opacity="0.62"/>
<rect x="919" y="84.4" width="0.9" height="1.1" fill="#8fb9b8" opacity="0.62"/>
<rect x="920" y="83.8" width="0.9" height="1.7" fill="#8fb9b8" opacity="0.62"/>
<rect x="921" y="84.4" width="0.9" height="1.1" fill="#8fb9b8" opacity="0.62"/>
<rect x="922" y="84.4" width="0.9" height="1.1" fill="#8fb9b8" opacity="0.62"/>
<rect x="923" y="84.4" width="0.9" height="1.1" fill="#8fb9b8" opacity="0.62"/>
<rect x="924" y="84.4" width="0.9" height="1.1" fill="#8fb9b8" opacity="0.62"/>
<rect x="925" y="84.4" width="0.9" height="1.1" fill="#8fb9b8" opacity="0.62"/>
<rect x="926" y="84.4" width="0.9" height="1.1" fill="#8fb9b8" opacity="0.62"/>
<rect x="927" y="84.4" width="0.9" height="1.1" fill="#b9bdc5" opacity="0.62"/>
<rect x="917" y="86.4" width="0.9" height="1.1" fill="#b9bdc5" opacity="0.62"/>
<rect x="919" y="86.4" width="0.9" height="1.1" fill="#8fb9b8" opacity="0.62"/>
<rect x="920" y="86.4" width="0.9" height="1.1" fill="#8fb9b8" opacity="0.62"/>
<rect x="921" y="86.4" width="0.9" height="1.1" fill="#8fb9b8" opacity="0.62"/>
<rect x="922" y="86.4" width="0.9" height="1.1" fill="#8fb9b8" opacity="0.62"/>
<rect x="923" y="86.4" width="0.9" height="1.1" fill="#b9bdc5" opacity="0.62"/>
<rect x="925" y="86.4" width="0.9" height="1.1" fill="#a3bd8a" opacity="0.62"/>
<rect x="926" y="86.4" width="0.9" height="1.1" fill="#a3bd8a" opacity="0.62"/>
<rect x="927" y="86.4" width="0.9" height="1.1" fill="#a3bd8a" opacity="0.62"/>
<rect x="928" y="86.4" width="0.9" height="1.1" fill="#a3bd8a" opacity="0.62"/>
<rect x="929" y="86.4" width="0.9" height="1.1" fill="#a3bd8a" opacity="0.62"/>
<rect x="919" y="88.4" width="0.9" height="1.1" fill="#8fb9b8" opacity="0.62"/>
<rect x="920" y="88.4" width="0.9" height="1.1" fill="#8fb9b8" opacity="0.62"/>
<rect x="921" y="88.4" width="0.9" height="1.1" fill="#8fb9b8" opacity="0.62"/>
<rect x="922" y="88.4" width="0.9" height="1.1" fill="#8fb9b8" opacity="0.62"/>
<rect x="923" y="88.4" width="0.9" height="1.1" fill="#8fb9b8" opacity="0.62"/>
<rect x="924" y="88.4" width="0.9" height="1.1" fill="#b9bdc5" opacity="0.62"/>
<rect x="926" y="88.4" width="0.9" height="1.1" fill="#a3bd8a" opacity="0.62"/>
<rect x="927" y="88.4" width="0.9" height="1.1" fill="#a3bd8a" opacity="0.62"/>
<rect x="928" y="88.4" width="0.9" height="1.1" fill="#a3bd8a" opacity="0.62"/>
<rect x="929" y="88.4" width="0.9" height="1.1" fill="#a3bd8a" opacity="0.62"/>
<rect x="930" y="88.4" width="0.9" height="1.1" fill="#a3bd8a" opacity="0.62"/>
<rect x="931" y="88.4" width="0.9" height="1.1" fill="#a3bd8a" opacity="0.62"/>
<rect x="932" y="87.8" width="0.9" height="1.7" fill="#a3bd8a" opacity="0.62"/>
<rect x="933" y="88.4" width="0.9" height="1.1" fill="#a3bd8a" opacity="0.62"/>
<rect x="934" y="87.8" width="0.9" height="1.7" fill="#a3bd8a" opacity="0.62"/>
<rect x="936" y="88.4" width="0.9" height="1.1" fill="#6b7888" opacity="0.62"/>
<rect x="938" y="87.8" width="0.9" height="1.7" fill="#6b7888" opacity="0.62"/>
<rect x="939" y="88.4" width="0.9" height="1.1" fill="#6b7888" opacity="0.62"/>
<rect x="940" y="87.8" width="0.9" height="1.7" fill="#6b7888" opacity="0.62"/>
<rect x="941" y="88.4" width="0.9" height="1.1" fill="#6b7888" opacity="0.62"/>
<rect x="942" y="87.8" width="0.9" height="1.7" fill="#6b7888" opacity="0.62"/>
<rect x="943" y="88.4" width="0.9" height="1.1" fill="#6b7888" opacity="0.62"/>
<rect x="945" y="87.8" width="0.9" height="1.7" fill="#6b7888" opacity="0.62"/>
<rect x="946" y="87.8" width="0.9" height="1.7" fill="#6b7888" opacity="0.62"/>
<rect x="947" y="88.4" width="0.9" height="1.1" fill="#6b7888" opacity="0.62"/>
<rect x="949" y="88.4" width="0.9" height="1.1" fill="#6b7888" opacity="0.62"/>
<rect x="950" y="88.4" width="0.9" height="1.1" fill="#6b7888" opacity="0.62"/>
<rect x="951" y="88.4" width="0.9" height="1.1" fill="#6b7888" opacity="0.62"/>
<rect x="952" y="88.4" width="0.9" height="1.1" fill="#6b7888" opacity="0.62"/>
<rect x="953" y="88.4" width="0.9" height="1.1" fill="#6b7888" opacity="0.62"/>
<rect x="954" y="88.4" width="0.9" height="1.1" fill="#6b7888" opacity="0.62"/>
<rect x="955" y="88.4" width="0.9" height="1.1" fill="#6b7888" opacity="0.62"/>
<rect x="957" y="88.4" width="0.9" height="1.1" fill="#6b7888" opacity="0.62"/>
<rect x="958" y="87.8" width="0.9" height="1.7" fill="#6b7888" opacity="0.62"/>
<rect x="919" y="90.4" width="0.9" height="1.1" fill="#8fb9b8" opacity="0.62"/>
<rect x="920" y="90.4" width="0.9" height="1.1" fill="#8fb9b8" opacity="0.62"/>
<rect x="921" y="90.4" width="0.9" height="1.1" fill="#8fb9b8" opacity="0.62"/>
<rect x="922" y="89.8" width="0.9" height="1.7" fill="#8fb9b8" opacity="0.62"/>
<rect x="923" y="90.4" width="0.9" height="1.1" fill="#8fb9b8" opacity="0.62"/>
<rect x="924" y="90.4" width="0.9" height="1.1" fill="#b9bdc5" opacity="0.62"/>
<rect x="919" y="92.4" width="0.9" height="1.1" fill="#b9bdc5" opacity="0.62"/>
<rect x="921" y="92.4" width="0.9" height="1.1" fill="#8fb9b8" opacity="0.62"/>
<rect x="922" y="92.4" width="0.9" height="1.1" fill="#8fb9b8" opacity="0.62"/>
<rect x="923" y="92.4" width="0.9" height="1.1" fill="#8fb9b8" opacity="0.62"/>
<rect x="924" y="91.8" width="0.9" height="1.7" fill="#8fb9b8" opacity="0.62"/>
<rect x="925" y="92.4" width="0.9" height="1.1" fill="#8fb9b8" opacity="0.62"/>
<rect x="926" y="92.4" width="0.9" height="1.1" fill="#8fb9b8" opacity="0.62"/>
<rect x="927" y="92.4" width="0.9" height="1.1" fill="#8fb9b8" opacity="0.62"/>
<rect x="928" y="92.4" width="0.9" height="1.1" fill="#8fb9b8" opacity="0.62"/>
<rect x="929" y="92.4" width="0.9" height="1.1" fill="#8fb9b8" opacity="0.62"/>
<rect x="930" y="91.8" width="0.9" height="1.7" fill="#8fb9b8" opacity="0.62"/>
<rect x="931" y="92.4" width="0.9" height="1.1" fill="#8fb9b8" opacity="0.62"/>
<rect x="932" y="92.4" width="0.9" height="1.1" fill="#8fb9b8" opacity="0.62"/>
<rect x="933" y="91.8" width="0.9" height="1.7" fill="#8fb9b8" opacity="0.62"/>
<rect x="934" y="92.4" width="0.9" height="1.1" fill="#b9bdc5" opacity="0.62"/>
<rect x="936" y="91.8" width="0.9" height="1.7" fill="#b48eab" opacity="0.62"/>
<rect x="937" y="91.8" width="0.9" height="1.7" fill="#b48eab" opacity="0.62"/>
<g fill="none" stroke="#bdc0c6" stroke-width="1.6" stroke-linejoin="round"><path d="M838.5 39.2 H834.4 V49.6 H843.6 V47.5"/><path d="M841.2 36.5 V33.4 H846.8 L851 37.4 V43.2 H848.5"/></g>
<circle cx="843" cy="41.9" r="3.5" fill="#2b303b" stroke="#5ab4f0" stroke-width="1.6"/><path d="M845.7 44.7 L850 48.8" stroke="#5ab4f0" stroke-width="2.1" stroke-linecap="round"/>
<path d="M880.3 32.2 L889.4 41.2 L880.6 50.3 L871.3 41.2 Z" fill="#c8c9cc" stroke="#c8c9cc" stroke-width="0.5" stroke-linejoin="round"/>
<g stroke="#2b303b" stroke-width="1.3" fill="none"><path d="M878.4 35.2 L880.4 37.2 V45.2 M880.4 37.2 L884 41.5"/></g><g fill="#2b303b"><circle cx="880.3" cy="45.5" r="1.7"/><circle cx="884.2" cy="41.7" r="1.8"/><circle cx="880.4" cy="37.2" r="1.1"/></g>
<g fill="#c3c6cd"><rect x="910" y="34" width="18" height="3"/><rect x="910" y="34" width="2.2" height="15"/><rect x="925.8" y="34" width="2.2" height="15"/><rect x="918" y="34" width="2" height="15"/><rect x="910" y="47" width="18" height="2"/></g>
<g fill="#d8dbe2"><circle cx="950.5" cy="41" r="2.1"/><circle cx="957" cy="41" r="2.1"/><circle cx="963.5" cy="41" r="2.1"/></g>
<g fill="none" stroke="#e6e8ee" stroke-width="1.4"><circle cx="28.9" cy="696.2" r="1.7"/><circle cx="28.9" cy="706.9" r="1.7"/><circle cx="35.6" cy="698.3" r="1.5"/></g><path d="M28.9 697.9 V705.2 M35.6 699.8 Q35.3 703.6 29.3 704.8" fill="none" stroke="#e6e8ee" stroke-width="1.9"/>
<g fill="none" stroke="#e6e8ee" stroke-width="1.8"><path d="M114 701 A5.5 5.5 0 0 1 124 698"/><path d="M125 702 A5.5 5.5 0 0 1 115 705"/></g><path d="M121.5 695.5 L125.5 696 L125 700 Z M117.5 707.5 L113.5 707 L114 703 Z" fill="#e6e8ee"/>
<g fill="none" stroke="#e6e8ee" stroke-width="1.8" stroke-linecap="round" stroke-linejoin="round"><path d="M144.5 697.2 V706.3 M140.6 702.6 L144.5 706.5 L148.4 702.6"/><path d="M171.3 697.2 V706.3 M167.4 701.1 L171.3 697.2 L175.2 701.1"/></g>
<circle cx="199" cy="702.7" r="6.6" fill="#e6e8ee"/><path d="M196.3 700 L201.7 705.4 M201.7 700 L196.3 705.4" stroke="#3b4152" stroke-width="1.8"/>
<path d="M232 696 L238.5 708.5 H225.5 Z" fill="#e6e8ee" stroke="#e6e8ee" stroke-width="0.6" stroke-linejoin="round"/><rect x="231.2" y="700" width="1.6" height="5" fill="#3b4152"/><rect x="231.2" y="706" width="1.6" height="1.6" fill="#3b4152"/>
<path d="M281 693.5 L274.5 702.5 H278.5 L276.5 709.5 L283.5 700 H279.5 Z" fill="#e6e8ee"/>
<circle cx="418.5" cy="701" r="3.3" fill="none" stroke="#e6e8ee" stroke-width="1.8"/><path d="M410.5 701 H415 M422 701 H426.5" stroke="#e6e8ee" stroke-width="1.8"/>
<circle cx="949.5" cy="701.5" r="8.6" fill="#e6e8ee"/><circle cx="946.5" cy="699" r="1.4" fill="#3b4152"/><circle cx="952.5" cy="699" r="1.4" fill="#3b4152"/><path d="M945 702.5 Q949.5 708 954 702.5" fill="none" stroke="#3b4152" stroke-width="1.6"/>
</svg>
<div class="a " style="left:43.5px;top:171.7px;font-size:14px;color:#1f2229;width:10px;text-align:center;-webkit-text-stroke:0.2px">2</div>
<div class="a sb" style="left:41.5px;top:693.2px">master*</div>
<div class="a sb" style="left:130.5px;top:693.2px">6</div>
<div class="a sb" style="left:156.2px;top:693.2px">0</div>
<div class="a sb" style="left:211.5px;top:693.2px">0</div>
<div class="a sb" style="left:244.5px;top:693.2px">0</div>
<div class="a sb" style="left:430px;top:693.2px">torosent, a month ago</div>
<div class="a sb" style="left:604.5px;top:693.2px"><span style="letter-spacing:-0.2px">Ln 2, Col 17</span></div>
<div class="a sb" style="left:701.5px;top:693.2px">Spaces: 2</div>
<div class="a sb" style="left:786.5px;top:693.2px">UTF-8</div>
<div class="a sb" style="left:848.5px;top:693.2px">LF</div>
<div class="a sb" style="left:883px;top:693.2px">YAML</div>
</body></html>
